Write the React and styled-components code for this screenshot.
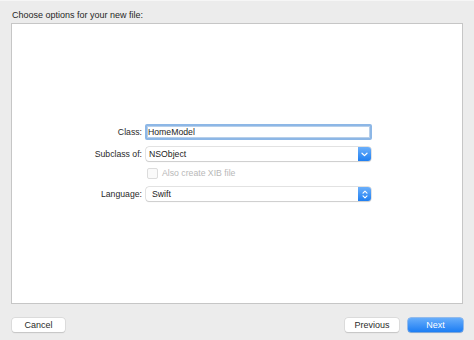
import React from "react";
import styled, { createGlobalStyle } from "styled-components";

const Global = createGlobalStyle`
  html, body { margin: 0; padding: 0; background: #ececec; }
  body { font-family: "Liberation Sans", Arial, sans-serif; }
`;

const Window = styled.div`
  width: 474px;
  height: 340px;
  box-sizing: border-box;
  background: #ececec;
  border-top: 1px solid #f6f6f6;
  display: flex;
  flex-direction: column;
  padding: 0 11px 0 11px;
`;

const Title = styled.div`
  font-size: 9px;
  color: #262626;
  height: 22px;
  line-height: 28px;
  padding-left: 1px;
  white-space: nowrap;
`;

const Panel = styled.div`
  height: 281px;
  box-sizing: border-box;
  background: #fff;
  border: 1px solid #c6c6c6;
  padding: 100px 0 0 0;
`;

const Form = styled.div`
  display: grid;
  grid-template-columns: 130px 227px;
  column-gap: 3px;
  align-items: center;
`;

const Label = styled.div`
  font-size: 8.7px;
  color: #2a2a2a;
  text-align: right;
  white-space: nowrap;
  margin-top: ${(p) => p.$mt || 0}px;
`;

const TextField = styled.div`
  height: 16px;
  box-sizing: border-box;
  border: 2px solid #8db7e6;
  border-radius: 2px;
  box-shadow: inset 0 0 0 1px #b7cfea;
  background: #fff;
  font-size: 8.7px;
  color: #1c1c1c;
  line-height: 12px;
  padding-left: 1px;
`;

const Popup = styled.div`
  height: 14px;
  margin-top: ${(p) => p.$mt || 0}px;
  margin-left: 1px;
  width: 225px;
  box-sizing: border-box;
  background: #fff;
  border-radius: 3px;
  box-shadow: 0 0 0 0.5px #c9c9c9, 0 0.5px 1px rgba(0,0,0,0.18);
  display: flex;
  align-items: center;
  justify-content: space-between;
  font-size: 8.7px;
  color: #1c1c1c;
  padding-left: ${(p) => p.$pl || 3}px;
`;

const Stepper = styled.div`
  width: 13px;
  height: 14px;
  border-radius: 0 3px 3px 0;
  background: linear-gradient(#6cb0fb, #1f7ff1);
  display: flex;
  align-items: center;
  justify-content: center;
`;

const CheckRow = styled.div`
  display: flex;
  align-items: center;
  gap: 4px;
  margin-top: 6px;
  margin-left: 2px;
  height: 12px;
`;

const Checkbox = styled.div`
  width: 9px;
  height: 9px;
  border: 1px solid #dcdcdc;
  border-radius: 2px;
  background: #fafafa;
`;

const CheckLabel = styled.span`
  font-size: 8.7px;
  color: #b8b8b8;
`;

const Footer = styled.div`
  display: flex;
  align-items: center;
  padding-top: 14px;
  padding-left: 1px;
`;

const Button = styled.div`
  width: ${(p) => p.$w}px;
  height: 14px;
  margin-left: ${(p) => p.$ml || 0}px;
  box-sizing: border-box;
  border-radius: 3px;
  font-size: 9px;
  line-height: 14px;
  text-align: center;
  color: ${(p) => (p.$primary ? "#fff" : "#2a2a2a")};
  background: ${(p) => (p.$primary ? "linear-gradient(#67adfb, #1c7df4)" : "#fff")};
  box-shadow: ${(p) =>
    p.$primary
      ? "0 0 0 0.5px #3f8ef0, 0 0.5px 1px rgba(0,0,0,0.2)"
      : "0 0 0 0.5px #cfcfcf, 0 0.5px 1px rgba(0,0,0,0.2)"};
`;

const Spacer = styled.div`
  flex: 1;
`;

const Chevron = () => (
  <svg width="7" height="5" viewBox="0 0 7 5">
    <path d="M1 1.2 L3.5 3.6 L6 1.2" fill="none" stroke="#fff" strokeWidth="1.2" strokeLinecap="round" strokeLinejoin="round" />
  </svg>
);

const UpDown = () => (
  <svg width="6" height="9" viewBox="0 0 6 9">
    <path d="M1 3.2 L3 1.2 L5 3.2 M1 5.8 L3 7.8 L5 5.8" fill="none" stroke="#fff" strokeWidth="1.1" strokeLinecap="round" strokeLinejoin="round" />
  </svg>
);

export default function App() {
  return (
    <>
      <Global />
      <Window>
        <Title>Choose options for your new file:</Title>
        <Panel>
          <Form>
            <Label>Class:</Label>
            <TextField>HomeModel</TextField>
            <Label $mt={7}>Subclass of:</Label>
            <Popup $mt={7} $pl={3}>
              NSObject
              <Stepper>
                <Chevron />
              </Stepper>
            </Popup>
            <div />
            <CheckRow>
              <Checkbox />
              <CheckLabel>Also create XIB file</CheckLabel>
            </CheckRow>
            <Label $mt={8}>Language:</Label>
            <Popup $mt={8} $pl={6}>
              Swift
              <Stepper>
                <UpDown />
              </Stepper>
            </Popup>
          </Form>
        </Panel>
        <Footer>
          <Button $w={53}>Cancel</Button>
          <Spacer />
          <Button $w={54}>Previous</Button>
          <Button $w={55} $ml={9} $primary>Next</Button>
        </Footer>
      </Window>
    </>
  );
}
